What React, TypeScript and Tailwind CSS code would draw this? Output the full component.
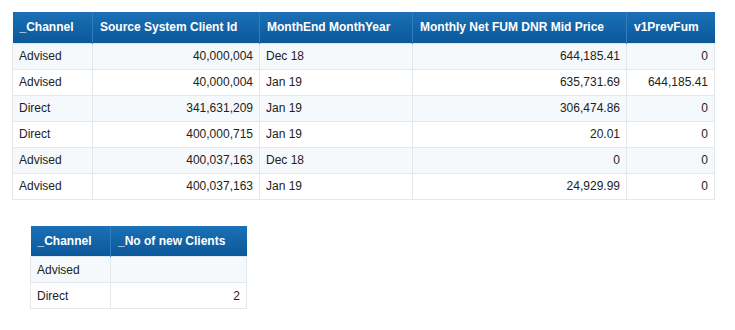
const rows = [
  ["Advised", "40,000,004", "Dec 18", "644,185.41", "0"],
  ["Advised", "40,000,004", "Jan 19", "635,731.69", "644,185.41"],
  ["Direct", "341,631,209", "Jan 19", "306,474.86", "0"],
  ["Direct", "400,000,715", "Jan 19", "20.01", "0"],
  ["Advised", "400,037,163", "Dec 18", "0", "0"],
  ["Advised", "400,037,163", "Jan 19", "24,929.99", "0"],
];

const headers = [
  { label: "_Channel", w: "w-[80px]" },
  { label: "Source System Client Id", w: "w-[167px]" },
  { label: "MonthEnd MonthYear", w: "w-[153px]" },
  { label: "Monthly Net FUM DNR Mid Price", w: "w-[214px]" },
  { label: "v1PrevFum", w: "w-[88px]" },
];

const align = ["text-left", "text-right", "text-left", "text-right", "text-right"];

function HeaderCell({ label, w }: { label: string; w: string }) {
  return (
    <th className={`${w} h-[31px] border-r border-[#2f7fc0] bg-gradient-to-b from-[#1b70b6] to-[#0b5899] px-[7px] text-left text-[12px] font-bold whitespace-nowrap text-white last:border-r-0`}>
      {label}
    </th>
  );
}

export default function App() {
  return (
    <div className="h-[330px] w-[735px] bg-white font-['Liberation_Sans',Arial,sans-serif] text-[12px] text-[#222]">
      <div className="pl-[12px] pt-[12px]">
        <table className="w-[702px] table-fixed border-collapse">
          <thead>
            <tr className="border-b border-[#0a4d86]">
              {headers.map((h) => (
                <HeaderCell key={h.label} label={h.label} w={h.w} />
              ))}
            </tr>
          </thead>
          <tbody>
            {rows.map((r, i) => (
              <tr key={i} className={i % 2 === 0 ? "bg-[#f6f9fb]" : "bg-white"}>
                {r.map((c, j) => (
                  <td key={j} className={`h-[26px] border border-[#e2e8ec] px-[6px] whitespace-nowrap ${align[j]}`}>
                    {c}
                  </td>
                ))}
              </tr>
            ))}
          </tbody>
        </table>
      </div>

      <div className="pl-[30px] pt-[26px]">
        <table className="w-[216px] table-fixed border-collapse">
          <thead>
            <tr className="border-b border-[#0a4d86]">
              <HeaderCell label="_Channel" w="w-[80px]" />
              <HeaderCell label="_No of new Clients" w="w-[136px]" />
            </tr>
          </thead>
          <tbody>
            <tr className="bg-[#f6f9fb]">
              <td className="h-[26px] border border-[#e2e8ec] px-[6px] text-left">Advised</td>
              <td className="h-[26px] border border-[#e2e8ec] px-[6px] text-right"></td>
            </tr>
            <tr className="bg-white">
              <td className="h-[26px] border border-[#e2e8ec] px-[6px] text-left">Direct</td>
              <td className="h-[26px] border border-[#e2e8ec] px-[6px] text-right">2</td>
            </tr>
          </tbody>
        </table>
      </div>
    </div>
  );
}
